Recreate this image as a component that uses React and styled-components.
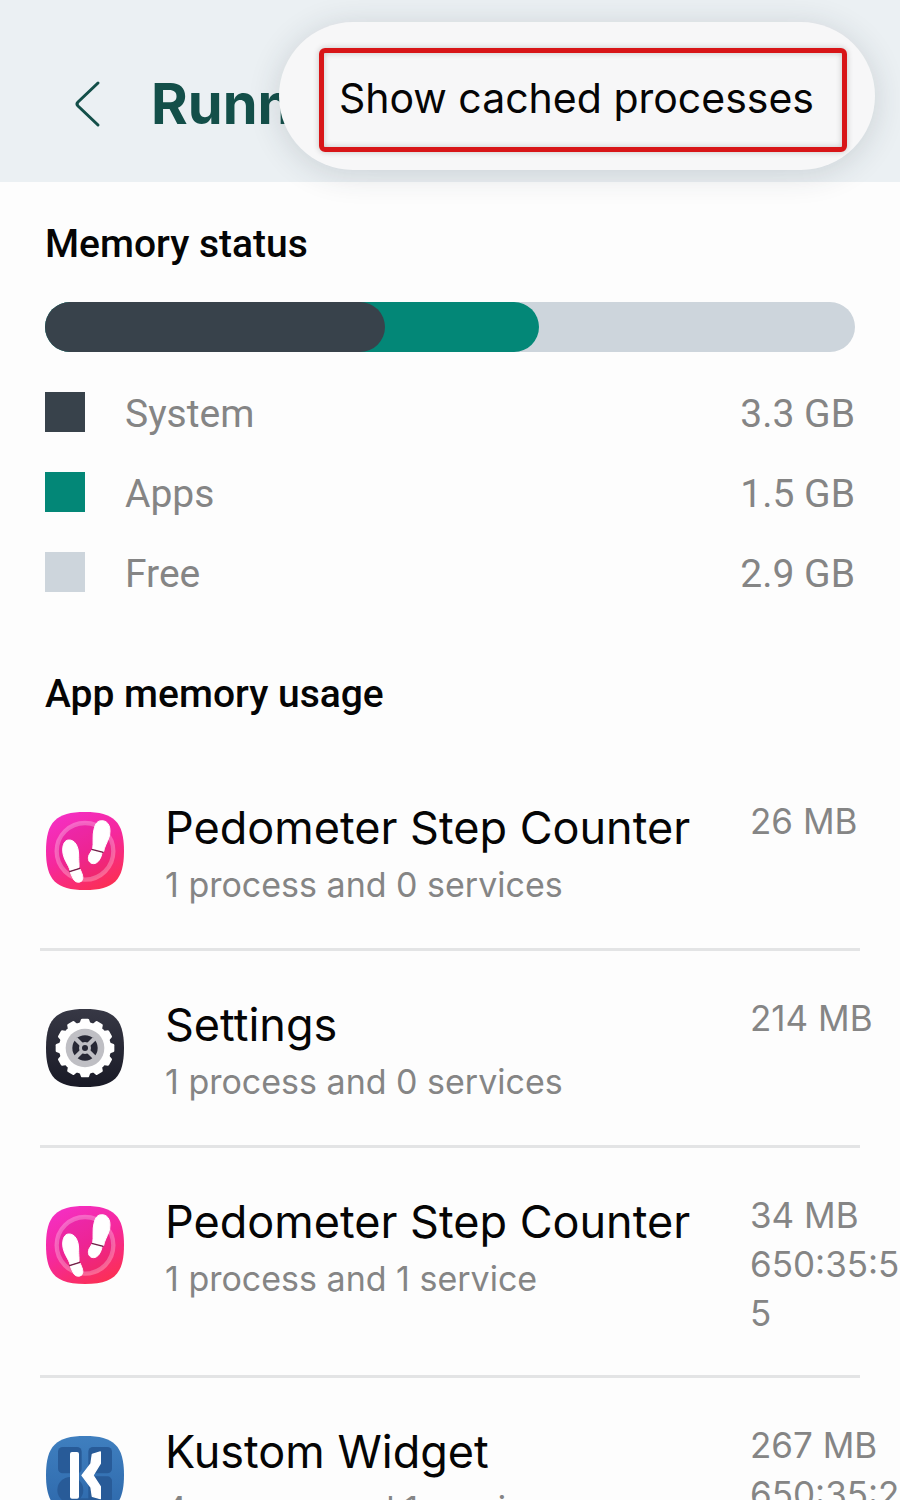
import React from "react";
import styled, { createGlobalStyle } from "styled-components";

const memory = [
    { name: "System", size: "3.3 GB", color: "#38424b", end: 42 },
    { name: "Apps", size: "1.5 GB", color: "#038777", end: 61 },
    { name: "Free", size: "2.9 GB", color: "#cdd5dc", end: 100 },
]

const apps = [
    { name: "Pedometer Step Counter", detail: "1 process and 0 services", size: "26 MB", icon: "steps" },
    { name: "Settings", detail: "1 process and 0 services", size: "214 MB", icon: "gear" },
    { name: "Pedometer Step Counter", detail: "1 process and 1 service", size: "34 MB", time: "650:35:55", icon: "steps" },
    { name: "Kustom Widget", detail: "4 process and 1 service", size: "267 MB", time: "650:35:2", icon: "kustom" },
]

const squircle = "M120 3C207 3 237 33 237 120C237 207 207 237 120 237C33 237 3 207 3 120C3 33 33 3 120 3Z"

const StepsIcon = () => (
    <AppIcon viewBox="0 0 240 240" aria-hidden="true">
        <defs>
            <linearGradient id="stepsBack" x1="0.2" y1="0" x2="0.7" y2="1">
                <stop offset="0" stopColor="#f42fc4" />
                <stop offset="0.5" stopColor="#f5289c" />
                <stop offset="1" stopColor="#fb2f55" />
            </linearGradient>
        </defs>
        <path d={squircle} fill="url(#stepsBack)" />
        <circle cx="120" cy="121" r="85" fill="#c01070" fillOpacity="0.14" stroke="#fff" strokeOpacity="0.28" strokeWidth="13" />
        <g transform="translate(-30 -33)" fill="#fff" stroke="#fff" strokeWidth="3">
            <path d="M200 62C222 62 230 85 222 112C216 130 208 140 206 155L173 147C176 130 172 105 177 88C181 70 188 62 200 62Z" />
            <path d="M171 150L201 158C199 175 188 191 176 191C162 191 157 178 162 165Z" />
            <path d="M100 120C120 118 131 140 131 165C131 185 133 195 132 203L105 212C102 195 83 178 83 150C83 132 90 121 100 120Z" />
            <path d="M106 217L135 207C141 220 147 232 141 242C134 249 122 248 117 240C112 233 110 226 106 217Z" />
            <path d="M170 148L205 157M103 215L135 205" stroke="#6d2348" strokeWidth="4" />
        </g>
    </AppIcon>
)

const GearIcon = () => (
    <AppIcon viewBox="0 0 240 240" aria-hidden="true">
        <defs>
            <linearGradient id="gearBack" x1="0" y1="0" x2="0" y2="1">
                <stop offset="0" stopColor="#373845" />
                <stop offset="1" stopColor="#191a26" />
            </linearGradient>
        </defs>
        <path d={squircle} fill="url(#gearBack)" />
        <circle cx="120" cy="120" r="78" fill="#fff" />
        {Array.from({ length: 12 }).map((x, y) => {
            return <path key={y} d="M103 48L108 34Q109 32 112 32H128Q131 32 132 34L137 48Z" fill="#fff" transform={`rotate(${y * 30} 120 120)`} />
        })}
        <circle cx="120" cy="120" r="58" fill="#bfbfc4" />
        <circle cx="120" cy="120" r="38" fill="#272835" />
        <path d="M92 92L148 148M148 92L92 148" stroke="#bfbfc4" strokeWidth="13" />
        <circle cx="120" cy="120" r="18" fill="#bfbfc4" />
        <circle cx="120" cy="120" r="9" fill="#272835" />
    </AppIcon>
)

const KustomIcon = () => (
    <AppIcon viewBox="0 0 240 240" aria-hidden="true">
        <defs>
            <linearGradient id="kustomBack" x1="0" y1="0" x2="0" y2="1">
                <stop offset="0" stopColor="#3f7fbf" />
                <stop offset="1" stopColor="#2d68ab" />
            </linearGradient>
        </defs>
        <path d={squircle} fill="url(#kustomBack)" />
        <g fill="#285b98">
            <rect x="39" y="36" width="71" height="79" rx="14" />
            <rect x="130" y="36" width="71" height="79" rx="14" />
            <circle cx="76" cy="165" r="39" />
            <rect x="130" y="124" width="71" height="79" rx="14" />
            <path d="M75 190H168V220H75Z" />
        </g>
        <rect x="75" y="51" width="27" height="140" rx="6" fill="#fff" />
        <path d="M142 58L166 51V85L144 121L166 155V191L142 184L138 157L111 121L138 86Z" fill="#fff" stroke="#fff" strokeWidth="4" strokeLinejoin="round" />
    </AppIcon>
)

const icons = { steps: StepsIcon, gear: GearIcon, kustom: KustomIcon }

const App = () => {
    return (
        <Page>
            <GlobalStyle />
            <Header>
                <BackButton aria-label="Back">
                    <svg width="30" height="50" viewBox="0 0 30 50" fill="none" stroke="currentColor" strokeWidth="3" strokeLinecap="round" strokeLinejoin="round">
                        <path d="M25 4L5 23Q3 25 5 27L25 46" />
                    </svg>
                </BackButton>
                <Title>Runn</Title>
                <Menu>
                    <MenuItem>Show cached processes</MenuItem>
                </Menu>
            </Header>
            <Status>
                <Heading>Memory status</Heading>
                <Bar>
                    {[...memory].reverse().map((x) => {
                        return <Fill key={x.name} $color={x.color} style={{ width: `${x.end}%` }} />
                    })}
                </Bar>
                <Legend>
                    {memory.map((x) => {
                        return (
                            <LegendRow key={x.name}>
                                <Swatch $color={x.color} />
                                <LegendText>
                                    <span>{x.name}</span>
                                    <span>{x.size}</span>
                                </LegendText>
                            </LegendRow>
                        )
                    })}
                </Legend>
                <Heading>App memory usage</Heading>
            </Status>
            <AppList>
                {apps.map((x, y) => {
                    const Icon = icons[x.icon]
                    return (
                        <AppRow key={y}>
                            <Icon />
                            <div>
                                <AppName>{x.name}</AppName>
                                <Detail>{x.detail}</Detail>
                            </div>
                            <Usage>
                                <div>{x.size}</div>
                                {x.time && <div>{x.time}</div>}
                            </Usage>
                        </AppRow>
                    )
                })}
            </AppList>
        </Page>
    )
}

const GlobalStyle = createGlobalStyle`
* {
box-sizing: border-box;
}
body {
margin: 0;
background-color: #fdfdfd;
}
`

const Page = styled.div`
height: 100vh;
overflow: hidden;
color: #050505;
font-family: Inter, "Liberation Sans", sans-serif;
`

const Header = styled.header`
position: relative;
display: flex;
align-items: center;
height: 182px;
padding: 26px 73px 0;
background-color: #ebf0f3;
`

const BackButton = styled.button`
display: flex;
margin-right: 48px;
padding: 0;
border: none;
background: none;
color: #134f49;
cursor: pointer;
`

const Title = styled.h1`
margin: 0;
color: #134f49;
font-size: 56px;
line-height: 64px;
font-weight: 700;
white-space: nowrap;
`

const Menu = styled.div`
position: absolute;
top: 22px;
right: 25px;
padding: 26px 28px 18px 40px;
border-radius: 74px;
background-color: #f7f7f8;
box-shadow: 0 4px 32px rgba(40, 50, 60, 0.16);
`

const MenuItem = styled.button`
display: block;
height: 104px;
padding: 0 28px 4px 15px;
border: 5px solid #d81518;
border-radius: 6px;
background: none;
box-shadow: 0 0 6px rgba(0, 0, 0, 0.2), inset 0 0 6px rgba(0, 0, 0, 0.2);
color: #050505;
font-family: inherit;
font-size: 41px;
line-height: 52px;
white-space: nowrap;
cursor: pointer;
`

const Status = styled.section`
padding: 38px 45px 0;
font-family: Roboto, sans-serif;
`

const Heading = styled.h2`
margin: 0;
font-size: 39px;
line-height: 48px;
font-weight: 500;
`

const Bar = styled.div`
display: grid;
height: 50px;
margin: 34px 0 20px;
`

const Fill = styled.div`
grid-area: 1 / 1;
border-radius: 25px;
background-color: ${(props) => props.$color};
`

const Legend = styled.ul`
margin: 0 0 58px;
padding: 0;
list-style: none;
`

const LegendRow = styled.li`
display: flex;
align-items: center;
height: 80px;
`

const Swatch = styled.div`
width: 40px;
height: 40px;
margin-right: 40px;
background-color: ${(props) => props.$color};
`

const LegendText = styled.div`
display: flex;
flex: 1;
justify-content: space-between;
padding-top: 4px;
color: #858585;
font-size: 39px;
line-height: 48px;
`

const AppList = styled.ul`
margin: 0;
padding: 36px 0 0;
list-style: none;
`

const AppRow = styled.li`
display: grid;
grid-template-columns: 80px 1fr 150px;
column-gap: 40px;
padding: 43px 0 0 45px;

&:not(:last-child)::after {
content: "";
grid-column: 1 / -1;
height: 3px;
margin: 37px 40px 0 -5px;
background-color: #e3e4e5;
}
`

const AppIcon = styled.svg`
width: 80px;
height: 80px;
margin-top: 14px;
`

const AppName = styled.div`
font-size: 45px;
line-height: 62px;
white-space: nowrap;
`

const Detail = styled.div`
color: #858585;
font-size: 34px;
line-height: 52px;
white-space: nowrap;
`

const Usage = styled.div`
color: #858585;
font-size: 35px;
line-height: 49px;
overflow-wrap: anywhere;
`

export default App
